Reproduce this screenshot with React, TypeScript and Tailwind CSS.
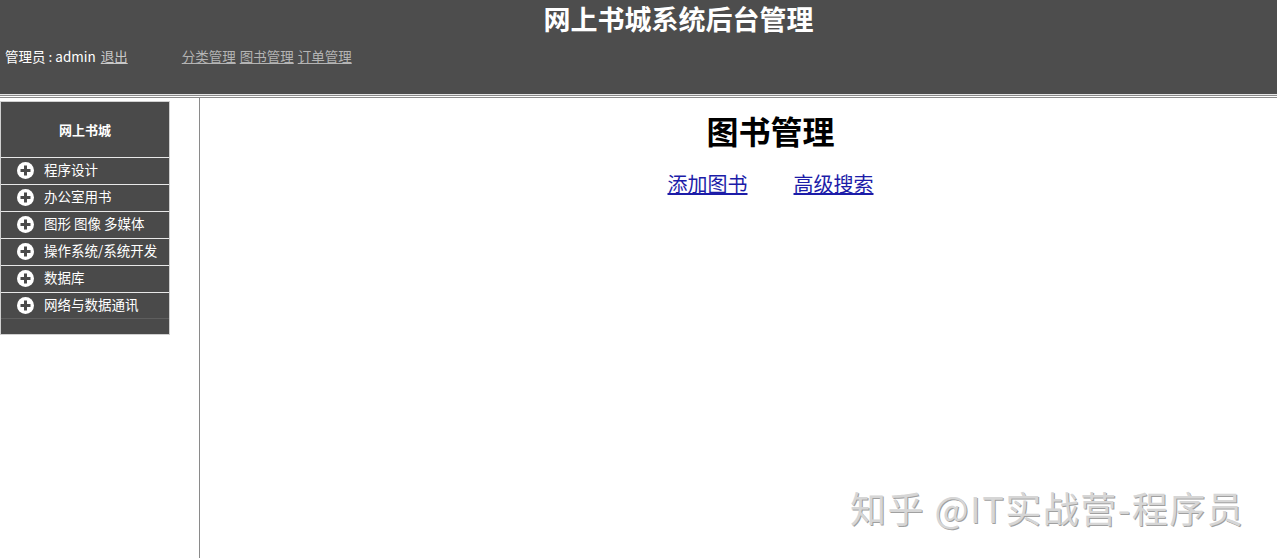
import React from "react";

const font = { fontFamily: '"Noto Sans CJK SC", "Noto Sans", sans-serif' };

function PlusIcon() {
  return (
    <svg width="17" height="17" viewBox="0 0 17 17" className="shrink-0">
      <circle cx="8.5" cy="8.5" r="8.5" fill="#ffffff" />
      <rect x="3.5" y="7" width="10" height="3" fill="#4a4a4a" />
      <rect x="7" y="3.5" width="3" height="10" fill="#4a4a4a" />
    </svg>
  );
}

const items = ["程序设计", "办公室用书", "图形 图像 多媒体", "操作系统/系统开发", "数据库", "网络与数据通讯"];

export default function App() {
  return (
    <div className="relative min-h-[558px] bg-white flex flex-col overflow-hidden" style={font}>
      <header className="h-[94px] bg-[#4d4d4d] flex flex-col">
        <div className="pl-[80px] text-center text-white font-bold text-[27px] leading-[38px]">网上书城系统后台管理</div>
        <div className="mt-[8px] pl-[5px] flex items-center text-[13.5px] leading-[20px]">
          <span className="text-white">管理员 : admin</span>
          <a href="#" className="ml-[5px] text-[#c8c8c8] underline">退出</a>
          <div className="ml-[54px] flex gap-[4px]">
            <a href="#" className="text-[#b4b4b4] underline">分类管理</a>
            <a href="#" className="text-[#b4b4b4] underline">图书管理</a>
            <a href="#" className="text-[#b4b4b4] underline">订单管理</a>
          </div>
        </div>
      </header>
      <div className="h-[1px] bg-[#e6e6e6]" />
      <div className="h-[1px] bg-[#8a8a8a]" />
      <div className="h-[1px] bg-white" />
      <div className="h-[1px] bg-[#8a8a8a]" />
      <div className="flex flex-1">
        <aside className="w-[200px] shrink-0 border-r border-[#8a8a8a] pt-[3px]">
          <div className="w-[170px] bg-[#4a4a4a] border border-[#d0d0d0]">
            <div className="h-[55px] flex items-center justify-center text-white font-bold text-[13px]">网上书城</div>
            {items.map((t) => (
              <div key={t} className="h-[27px] border-t border-[#e8e8e8] flex items-center pl-[16px] gap-[10px] pb-[1px]">
                <PlusIcon />
                <span className="text-white text-[13.5px] leading-none mb-[2px]">{t}</span>
              </div>
            ))}
            <div className="h-[16px] border-t border-[#5e5e5e] mt-[-1px]" />
          </div>
        </aside>
        <main className="flex-1 pl-[64px] flex flex-col items-center">
          <h1 className="mt-[12px] text-[32px] leading-[40px] font-bold text-black">图书管理</h1>
          <div className="mt-[20px] flex gap-[46px] text-[20px] leading-[28px]">
            <a href="#" className="text-[#1c1ca8] underline">添加图书</a>
            <a href="#" className="text-[#1c1ca8] underline">高级搜索</a>
          </div>
        </main>
      </div>
      <div
        className="absolute left-[850px] top-[484px] text-[36px] leading-[46px] text-[#d6d6d6] tracking-[1.5px] pointer-events-none"
        style={{ textShadow: "1px 1px 0 #a0a0a0" }}
      >
        知乎 @IT实战营-程序员
      </div>
    </div>
  );
}
